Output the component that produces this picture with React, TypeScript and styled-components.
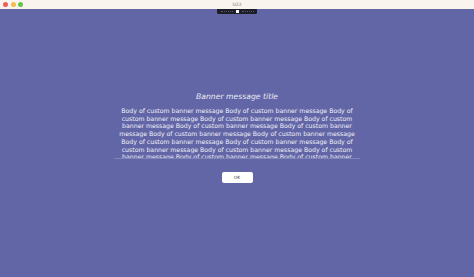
import styled, { createGlobalStyle } from "styled-components";

const GlobalStyle = createGlobalStyle`
  html, body, #root {
    margin: 0;
    padding: 0;
    height: 100%;
  }
  body {
    font-family: "DejaVu Sans", "Liberation Sans", sans-serif;
    overflow: hidden;
  }
`;

const BODY_TEXT = Array(20)
  .fill("Body of custom banner message")
  .join(" ");

const App = () => {
  return (
    <Window>
      <GlobalStyle />
      <TitleBar>
        <Lights>
          <Light color="#ee5f57" />
          <Light color="#f5bd4f" />
          <Light color="#5ec746" />
        </Lights>
        <WindowTitle>U22</WindowTitle>
        <span />
      </TitleBar>
      <Main>
        <DevBar>
          <DevDashes />
          <DevDot />
          <DevDashes />
        </DevBar>
        <BannerTitle>Banner message title</BannerTitle>
        <BannerBody>{BODY_TEXT}</BannerBody>
        <OkButton>OK</OkButton>
      </Main>
    </Window>
  );
};

const Window = styled.div`
  width: 474px;
  height: 277px;
  display: flex;
  flex-direction: column;
`;

const TitleBar = styled.div`
  height: 9px;
  flex-shrink: 0;
  background-color: #f9f4ee;
  display: grid;
  grid-template-columns: 1fr auto 1fr;
  align-items: center;
  padding: 0 3px;
`;

const Lights = styled.div`
  display: flex;
  gap: 2.5px;
`;

const Light = styled.div<{ color: string }>`
  width: 5px;
  height: 5px;
  border-radius: 50%;
  background-color: ${(p) => p.color};
`;

const WindowTitle = styled.div`
  font-size: 4.5px;
  color: #6b6b6b;
  line-height: 9px;
`;

const Main = styled.div`
  position: relative;
  flex: 1;
  background-color: #6266a6;
  display: flex;
  flex-direction: column;
  align-items: center;
  padding-top: 83px;
`;

const DevBar = styled.div`
  position: absolute;
  top: 0;
  left: 217px;
  width: 40px;
  height: 5px;
  background-color: #1d1d28;
  border-radius: 0 0 1.5px 1.5px;
  display: flex;
  align-items: center;
  justify-content: center;
  gap: 3px;
`;

const DevDashes = styled.div`
  width: 12px;
  height: 1px;
  border-top: 1px dotted #55576a;
`;

const DevDot = styled.div`
  width: 3px;
  height: 3px;
  background-color: #ffffff;
  margin-top: -1px;
`;

const BannerTitle = styled.div`
  font-size: 7.7px;
  font-style: italic;
  line-height: 10px;
  color: #ebebf5;
`;

const BannerBody = styled.div`
  margin-top: 5px;
  width: 246px;
  height: 51px;
  overflow: hidden;
  font-size: 6.2px;
  line-height: 7.7px;
  text-align: center;
  color: #f0f0f8;
  border-bottom: 1px solid rgba(255, 255, 255, 0.2);
`;

const OkButton = styled.button`
  margin-top: 13px;
  width: 31px;
  height: 11px;
  padding: 0;
  border: none;
  border-radius: 2px;
  background-color: #ffffff;
  font-family: "DejaVu Sans", sans-serif;
  font-size: 4.5px;
  color: #444;
`;

export default App;
